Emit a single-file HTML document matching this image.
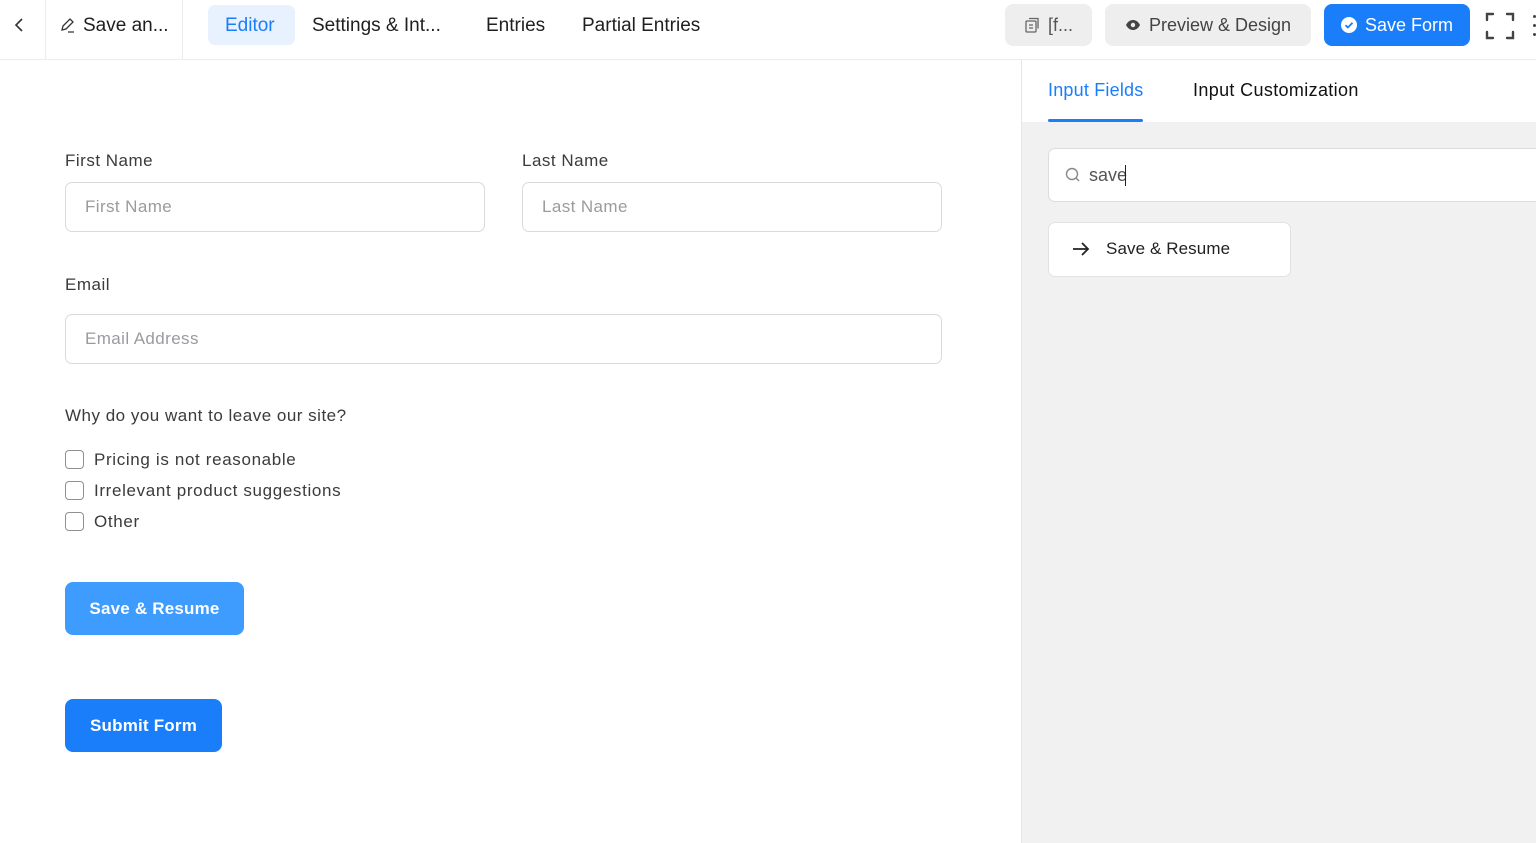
<!DOCTYPE html>
<html><head><meta charset="utf-8"><style>
*{box-sizing:border-box;margin:0;padding:0}
body{width:1536px;height:843px;overflow:hidden;background:#fff;font-family:"Liberation Sans",sans-serif;color:#1e1f21;position:relative}
.abs{position:absolute}
.top{position:absolute;left:0;top:0;width:1536px;height:60px;border-bottom:1px solid #ececec;background:#fff}
.t{position:absolute;font-size:19px;top:15px;color:#1e1f21}
.btn{position:absolute;top:4px;height:42px;border-radius:8px;font-size:18px;display:flex;align-items:center;justify-content:center;gap:8px}
.lbl{position:absolute;font-size:17px;color:#3a3b3d;letter-spacing:0.5px}
.inp{position:absolute;height:50px;border:1px solid #d9dade;border-radius:7px;font-size:17px;color:#9a9ba0;padding:0 19px;display:flex;align-items:center;letter-spacing:0.4px}
.cb{position:absolute;left:65px;width:19px;height:19px;border:1.5px solid #8f9095;border-radius:4px}
.ct{position:absolute;left:94px;font-size:17px;color:#3a3b3d;letter-spacing:0.65px}
</style></head><body>
<div class="top">
 <div class="abs" style="left:45px;top:0;width:1px;height:59px;background:#ececec"></div>
 <div class="abs" style="left:182px;top:0;width:1px;height:59px;background:#ececec"></div>
 <svg class="abs" style="left:12px;top:17px" width="14" height="16" viewBox="0 0 14 16"><path d="M10 2L4 8l6 6" fill="none" stroke="#333" stroke-width="1.6"/></svg>
 <svg class="abs" style="left:59px;top:16px" width="18" height="18" viewBox="0 0 18 18"><path d="M3 14l1-4 7-7 3 3-7 7-4 1zM9 16h6" fill="none" stroke="#333" stroke-width="1.3"/></svg>
 <div class="t" style="left:83px">Save an...</div>
 <div class="abs" style="left:208px;top:5px;width:87px;height:40px;background:#e8f1fe;border-radius:7px"></div>
 <div class="t" style="left:225px;color:#1a7efb">Editor</div>
 <div class="t" style="left:312px">Settings &amp; Int...</div>
 <div class="t" style="left:486px">Entries</div>
 <div class="t" style="left:582px">Partial Entries</div>
 <div class="btn" style="left:1005px;width:87px;background:#eeeeee;color:#555">
  <svg width="16" height="16" viewBox="0 0 16 16"><rect x="2" y="4" width="10" height="11" rx="1" fill="none" stroke="#666" stroke-width="1.3"/><path d="M5 1.5h9v10M5 8h4M5 11h4" fill="none" stroke="#666" stroke-width="1.3"/></svg>[f...</div>
 <div class="btn" style="left:1105px;width:206px;background:#eeeeee;color:#444">
  <svg width="16" height="12" viewBox="0 0 16 12"><path d="M1 6C3 2 6 1 8 1s5 1 7 5c-2 4-5 5-7 5S3 10 1 6z" fill="#444"/><circle cx="8" cy="6" r="2.2" fill="#eee"/></svg>Preview &amp; Design</div>
 <div class="btn" style="left:1324px;width:146px;background:#1a7efb;color:#fff">
  <svg width="16" height="16" viewBox="0 0 16 16"><circle cx="8" cy="8" r="8" fill="#fff"/><path d="M4.5 8.2l2.4 2.3 4.6-4.8" fill="none" stroke="#1a7efb" stroke-width="1.8"/></svg>Save Form</div>
 <svg class="abs" style="left:1485px;top:11px" width="30" height="30" viewBox="0 0 30 30"><path d="M2 9V3h6M22 3h6v6M28 21v6h-6M8 27H2v-6" fill="none" stroke="#444" stroke-width="2.4" stroke-linecap="round"/></svg>
 <div class="abs" style="left:1533px;top:15px;width:3px;height:3px;background:#444;border-radius:2px"></div>
 <div class="abs" style="left:1533px;top:24px;width:3px;height:3px;background:#444;border-radius:2px"></div>
 <div class="abs" style="left:1533px;top:33px;width:3px;height:3px;background:#444;border-radius:2px"></div>
</div>

<div class="lbl" style="left:65px;top:151px">First Name</div>
<div class="lbl" style="left:522px;top:151px">Last Name</div>
<div class="inp" style="left:65px;top:182px;width:420px">First Name</div>
<div class="inp" style="left:522px;top:182px;width:420px">Last Name</div>
<div class="lbl" style="left:65px;top:275px">Email</div>
<div class="inp" style="left:65px;top:314px;width:877px">Email Address</div>
<div class="lbl" style="left:65px;top:406px">Why do you want to leave our site?</div>
<div class="cb" style="top:450px"></div><div class="ct" style="top:450px">Pricing is not reasonable</div>
<div class="cb" style="top:481px"></div><div class="ct" style="top:481px">Irrelevant product suggestions</div>
<div class="cb" style="top:512px"></div><div class="ct" style="top:512px">Other</div>
<div class="abs" style="left:65px;top:582px;width:179px;height:53px;background:#3d9cfd;border-radius:8px;color:#fff;font-size:17px;font-weight:bold;display:flex;align-items:center;justify-content:center;letter-spacing:0.2px">Save &amp; Resume</div>
<div class="abs" style="left:65px;top:699px;width:157px;height:53px;background:#1a7efb;border-radius:8px;color:#fff;font-size:17px;font-weight:bold;display:flex;align-items:center;justify-content:center;letter-spacing:0.2px">Submit Form</div>

<div class="abs" style="left:1021px;top:60px;width:515px;height:783px;background:#f1f1f1;border-left:1px solid #e6e6e6"></div>
<div class="abs" style="left:1022px;top:60px;width:514px;height:62px;background:#fff"></div>
<div class="abs" style="left:1048px;top:80px;font-size:18px;color:#1a7efb;letter-spacing:0.2px">Input Fields</div>
<div class="abs" style="left:1048px;top:119px;width:95px;height:3px;background:#1a7efb;border-radius:2px"></div>
<div class="abs" style="left:1193px;top:80px;font-size:18px;color:#111;letter-spacing:0.35px">Input Customization</div>
<div class="abs" style="left:1048px;top:148px;width:500px;height:54px;background:#fff;border:1px solid #dcdcdc;border-radius:7px"></div>
<svg class="abs" style="left:1065px;top:167px" width="16" height="16" viewBox="0 0 16 16"><circle cx="7" cy="7" r="5.5" fill="none" stroke="#888" stroke-width="1.4"/><path d="M11 11l3 3" stroke="#888" stroke-width="1.4"/></svg>
<div class="abs" style="left:1089px;top:165px;font-size:18px;color:#555">save</div>
<div class="abs" style="left:1125px;top:165px;width:1px;height:21px;background:#222"></div>
<div class="abs" style="left:1048px;top:222px;width:243px;height:55px;background:#fff;border:1px solid #e2e2e2;border-radius:7px"></div>
<svg class="abs" style="left:1072px;top:241px" width="18" height="16" viewBox="0 0 18 16"><path d="M1 8h15M10 2l6 6-6 6" fill="none" stroke="#222" stroke-width="1.8"/></svg>
<div class="abs" style="left:1106px;top:239px;font-size:17px;color:#222;letter-spacing:0.1px">Save &amp; Resume</div>
</body></html>
